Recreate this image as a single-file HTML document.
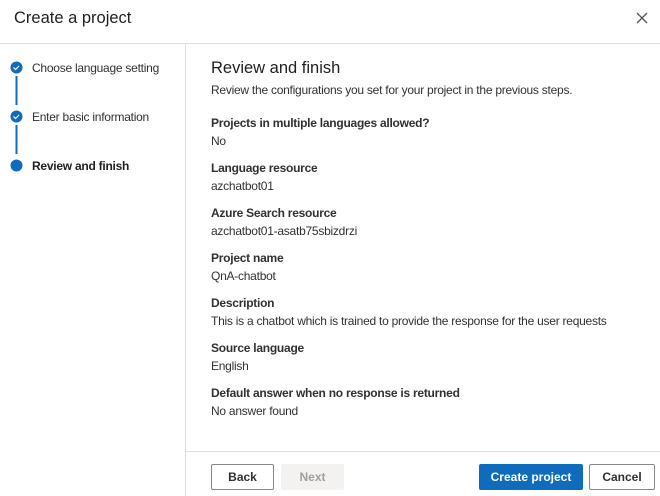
<!DOCTYPE html><html><head><style>
body{margin:0;width:660px;height:496px;background:#fff;font-family:"Liberation Sans",sans-serif;color:#323130;position:relative;overflow:hidden}
.a{position:absolute;white-space:nowrap}
.t{font-size:12px;letter-spacing:-0.25px}
.b{font-weight:bold}
.btn{position:absolute;top:464px;height:26px;box-sizing:border-box;border-radius:2px;font-size:12px;font-weight:bold;display:flex;align-items:center;justify-content:center}
</style></head><body>
<div class="a" style="left:14px;top:9px;font-size:16.5px;color:#201f1e">Create a project</div>
<svg class="a" style="left:636px;top:12px" width="12" height="12"><path d="M1 1L11 11M11 1L1 11" stroke="#555" stroke-width="1.3"/></svg>
<div class="a" style="left:0;top:43px;width:660px;height:1px;background:#e1dfdd"></div>
<div class="a" style="left:185px;top:44px;width:1px;height:452px;background:#e1dfdd"></div>
<div class="a" style="left:186px;top:451px;width:474px;height:1px;background:#e1dfdd"></div>
<svg class="a" style="left:0;top:55px" width="30" height="125">
<circle cx="16.5" cy="12.5" r="6" fill="#0f6cbd"/><path d="M13.5 12.5l2 2 3.5-3.5" stroke="#fff" stroke-width="1.2" fill="none"/>
<rect x="15.5" y="21" width="2" height="29" fill="#0f6cbd"/>
<circle cx="16.5" cy="61.5" r="6" fill="#0f6cbd"/><path d="M13.5 61.5l2 2 3.5-3.5" stroke="#fff" stroke-width="1.2" fill="none"/>
<rect x="15.5" y="70" width="2" height="29" fill="#0f6cbd"/>
<circle cx="16.5" cy="110.5" r="6" fill="#0f6cbd"/>
</svg>
<div class="a t" style="left:32px;top:61px">Choose language setting</div>
<div class="a t" style="left:32px;top:110px">Enter basic information</div>
<div class="a t" style="left:32px;top:159px;color:#201f1e;font-weight:600">Review and finish</div>
<div class="a" style="left:211px;top:59px;font-size:16.5px;color:#201f1e">Review and finish</div>
<div class="a t" style="left:211px;top:83px">Review the configurations you set for your project in the previous steps.</div>
<div class="a t b" style="left:211px;top:116px">Projects in multiple languages allowed?</div><div class="a t" style="left:211px;top:134px">No</div>
<div class="a t b" style="left:211px;top:161px">Language resource</div><div class="a t" style="left:211px;top:179px">azchatbot01</div>
<div class="a t b" style="left:211px;top:206px">Azure Search resource</div><div class="a t" style="left:211px;top:224px">azchatbot01-asatb75sbizdrzi</div>
<div class="a t b" style="left:211px;top:251px">Project name</div><div class="a t" style="left:211px;top:269px">QnA-chatbot</div>
<div class="a t b" style="left:211px;top:296px">Description</div><div class="a t" style="left:211px;top:314px">This is a chatbot which is trained to provide the response for the user requests</div>
<div class="a t b" style="left:211px;top:341px">Source language</div><div class="a t" style="left:211px;top:359px">English</div>
<div class="a t b" style="left:211px;top:386px">Default answer when no response is returned</div><div class="a t" style="left:211px;top:404px">No answer found</div>
<div class="btn" style="left:211px;width:63px;border:1px solid #8a8886">Back</div>
<div class="btn" style="left:281px;width:63px;background:#f3f2f1;color:#a19f9d">Next</div>
<div class="btn" style="left:479px;width:104px;background:#0f6cbd;color:#fff">Create project</div>
<div class="btn" style="left:589px;width:66px;border:1px solid #8a8886">Cancel</div>
</body></html>
